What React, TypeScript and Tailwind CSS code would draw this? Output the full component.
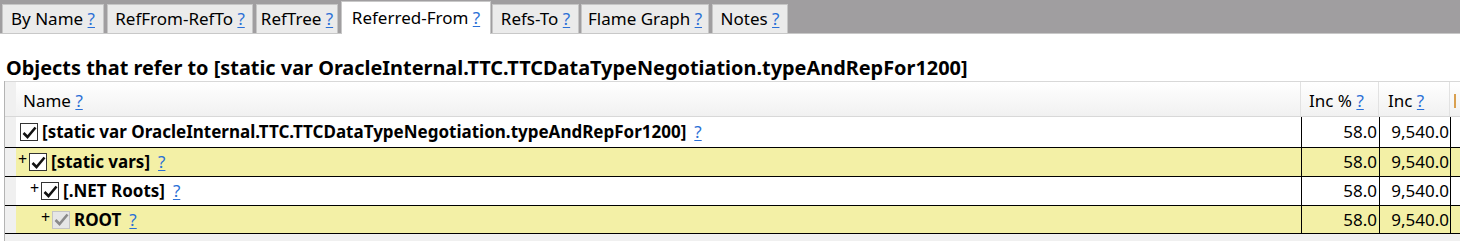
import React from 'react'

const font = { fontFamily: '"Segoe UI", "Noto Sans", "Open Sans", sans-serif' }

function Help()
{
    return <span className="text-[#2a6fd6] underline underline-offset-2 font-normal">?</span>
}

function Tab({ label, w, active }: { label: string; w: string; active?: boolean })
{
    if (active) {
        return (
            <div className={`${w} h-[33px] -mb-px bg-white border border-b-0 border-[#c8c8c8] flex items-center justify-center text-[17px] text-black whitespace-nowrap`}>
                {label}&nbsp;<Help />
            </div>
        )
    }
    return (
        <div className={`${w} h-[29px] bg-[#ebebeb] border border-b-0 border-[#c6c6c6] flex items-center justify-center text-[17px] text-black whitespace-nowrap`}>
            {label}&nbsp;<Help />
        </div>
    )
}

function Check({ disabled }: { disabled?: boolean })
{
    return (
        <div className={`w-[18px] h-[18px] border flex items-center justify-center shrink-0 ${disabled ? 'bg-[#e6e6e6] border-[#c4c4c4]' : 'bg-white border-[#333]'}`}>
            <svg width="15" height="13" viewBox="0 0 15 13">
                <path d="M1.5 7 L5.5 11 L13.5 1.5" fill="none" stroke={disabled ? '#8a8a8a' : '#111'} strokeWidth="2.6" />
            </svg>
        </div>
    )
}

type Row = { label: string; indent: number; plus: boolean; yellow: boolean; disabled?: boolean; h: string }

const rows: Row[] = [
    { label: '[static var OracleInternal.TTC.TTCDataTypeNegotiation.typeAndRepFor1200]', indent: 4, plus: false, yellow: false, h: 'h-[31px]' },
    { label: '[static vars]', indent: 2, plus: true, yellow: true, h: 'h-[29px]' },
    { label: '[.NET Roots]', indent: 14, plus: true, yellow: false, h: 'h-[29px]' },
    { label: 'ROOT', indent: 25, plus: true, yellow: true, disabled: true, h: 'h-[28px]' },
]

export default function App()
{
    return (
        <div className="w-[1460px] h-[241px] bg-white overflow-hidden text-black" style={font}>
            <div className="h-[34px] bg-[#a09ea0] border-b border-[#c8c8c8] flex items-end pl-[2px]">
                <Tab label="By Name" w="w-[102px]" />
                <div className="w-[3px]" />
                <Tab label="RefFrom-RefTo" w="w-[146px]" />
                <div className="w-[3px]" />
                <Tab label="RefTree" w="w-[82px]" />
                <div className="w-[3px]" />
                <Tab label="Referred-From" w="w-[150px]" active />
                <div className="w-[1px]" />
                <Tab label="Refs-To" w="w-[87px]" />
                <div className="w-[2px]" />
                <Tab label="Flame Graph" w="w-[128px]" />
                <div className="w-[3px]" />
                <Tab label="Notes" w="w-[76px]" />
            </div>
            <div className="mt-[21px] px-[6px] h-[25px] leading-[25px] text-[19.9px] font-bold whitespace-nowrap">
                Objects that refer to [static var OracleInternal.TTC.TTCDataTypeNegotiation.typeAndRepFor1200]
            </div>
            <div className="ml-[4px] border-l border-[#b4b4b4] mt-[1px]">
                <div className="flex h-[36px] border-t border-[#a8b4c4] border-b border-[#d8d8d8] bg-gradient-to-b from-white to-[#f1f1f1] text-[17px]">
                    <div className="w-[11px] bg-[#f0f0f0] shrink-0" />
                    <div className="flex-1 flex items-center pt-[4px] pl-[7px] border-r border-[#e2e2e2]">Name&nbsp;<Help /></div>
                    <div className="w-[78px] flex items-center pt-[4px] pl-[8px] border-r border-[#e2e2e2]">Inc %&nbsp;<Help /></div>
                    <div className="w-[71px] flex items-center pt-[4px] pl-[9px] border-r border-[#e2e2e2]">Inc&nbsp;<Help /></div>
                    <div className="w-[10px] flex items-center pt-[4px] pl-[4px] overflow-hidden">
                        <div className="w-[2px] h-[14px] bg-[#d9a050]" />
                    </div>
                </div>
                {rows.map((r) => (
                    <div key={r.label} className={`flex ${r.h} border-b border-black`}>
                        <div className="w-[11px] bg-[#f0f0f0] shrink-0" />
                        <div className={`flex-1 flex items-center ${r.yellow ? 'bg-[#f3f0a6]' : 'bg-white'}`} style={{ paddingLeft: r.indent }}>
                            {r.plus && <span className="text-[16px] leading-none self-start mt-[3px] w-[11px]">+</span>}
                            <Check disabled={r.disabled} />
                            <span className="ml-[4px] text-[17px] font-bold whitespace-nowrap">{r.label}</span>
                            <span className="ml-[8px] text-[17px]"><Help /></span>
                        </div>
                        <div className={`w-[78px] border-l border-black flex items-center justify-end pr-[2px] text-[17px] ${r.yellow ? 'bg-[#f3f0a6]' : 'bg-white'}`}>58.0</div>
                        <div className={`w-[71px] border-l border-black flex items-center justify-end pr-[1px] text-[17px] ${r.yellow ? 'bg-[#f3f0a6]' : 'bg-white'}`}>9,540.0</div>
                        <div className={`w-[10px] border-l border-black ${r.yellow ? 'bg-[#f3f0a6]' : 'bg-white'}`} />
                    </div>
                ))}
                <div className="h-[20px] bg-[#f0f0f0]" />
            </div>
        </div>
    )
}
